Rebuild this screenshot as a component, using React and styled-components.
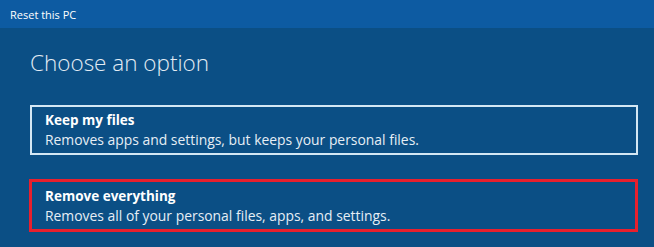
import React from 'react'
import styled, { createGlobalStyle } from 'styled-components'

const GlobalStyle = createGlobalStyle`
    html, body {
        margin: 0;
        padding: 0;
        background: #0b4f85;
    }
    body {
        font-family: "Open Sans", "Noto Sans", "Liberation Sans", sans-serif;
        color: #ffffff;
    }
`

const Screen = styled.div`
    width: 654px;
    height: 247px;
    display: flex;
    flex-direction: column;
    background: #0b4f85;
    overflow: hidden;
`

const TitleBar = styled.div`
    height: 28px;
    display: flex;
    align-items: center;
    padding-left: 10px;
    background: #0d5ba2;
    font-size: 11px;
    color: #ffffff;
`

const Main = styled.div`
    display: flex;
    flex-direction: column;
    padding: 20px 16px 0 30px;
`

const Heading = styled.h1`
    margin: 0 0 27px 0;
    font-size: 22.5px;
    line-height: 30px;
    font-weight: 300;
    color: #e3ecf4;
`

const OptionList = styled.div`
    display: flex;
    flex-direction: column;
    gap: 24px;
`

const Option = styled.div`
    display: flex;
    flex-direction: column;
    padding: ${p => (p.$marked ? '5px 14px 4px 13px' : '4px 14px 4px 13px')};
    margin-left: ${p => (p.$marked ? '-1px' : '0')};
    border: ${p => (p.$marked ? '3px solid #e8202d' : '2px solid #d4e7f4')};
`

const OptionTitle = styled.div`
    font-size: 13.5px;
    line-height: 19px;
    font-weight: 700;
    color: #ffffff;
`

const OptionText = styled.div`
    font-size: 13.9px;
    line-height: 19px;
    color: #e6eef5;
`

const options = [
    { title: 'Keep my files', text: 'Removes apps and settings, but keeps your personal files.' },
    { title: 'Remove everything', text: 'Removes all of your personal files, apps, and settings.', marked: true },
]

export default function App() {
    return (
        <>
            <GlobalStyle />
            <Screen>
                <TitleBar>Reset this PC</TitleBar>
                <Main>
                    <Heading>Choose an option</Heading>
                    <OptionList>
                        {options.map(o => (
                            <Option key={o.title} $marked={o.marked}>
                                <OptionTitle>{o.title}</OptionTitle>
                                <OptionText>{o.text}</OptionText>
                            </Option>
                        ))}
                    </OptionList>
                </Main>
            </Screen>
        </>
    )
}
